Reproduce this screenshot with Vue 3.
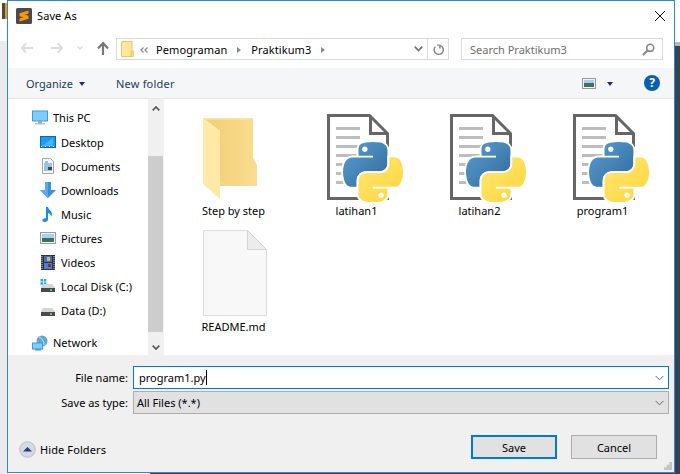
<template>
  <div class="screen">
    <!-- whatever is behind the dialog -->
    <div class="behind-left"></div>
    <div class="behind-logo"></div>
    <div class="behind-right"></div>
    <div class="behind-bottom"></div>

    <svg class="defs" width="0" height="0">
      <defs>
        <linearGradient id="pyBlue" x1="0" y1="0" x2="1" y2="1">
          <stop offset="0" stop-color="#5a9fd4" />
          <stop offset="1" stop-color="#306998" />
        </linearGradient>
        <linearGradient id="pyYellow" x1="0" y1="0" x2="1" y2="1">
          <stop offset="0" stop-color="#ffe873" />
          <stop offset="1" stop-color="#ffd43b" />
        </linearGradient>
        <linearGradient id="folderBack" x1="0" y1="0" x2="1" y2="0">
          <stop offset="0" stop-color="#f0cd72" />
          <stop offset="1" stop-color="#f9dd90" />
        </linearGradient>
      </defs>
    </svg>

    <div class="dialog">
      <div class="titlebar">
        <svg class="app-icon" viewBox="0 0 16 16">
          <rect width="16" height="16" rx="1.5" fill="#4a4a4a" />
          <path d="M12.5 2.5 3.5 5.2v3l9-2.7zM12.5 7.8l-9-2.6v3l9 2.6zM12.5 7.8l-9 2.7v3l9-2.7z" fill="#ff9800" />
        </svg>
        <span class="title">Save As</span>
        <svg class="close" viewBox="0 0 10 10">
          <path d="M0 0 10 10M10 0 0 10" stroke="#111" stroke-width="1" fill="none" />
        </svg>
      </div>

      <div class="navbar">
        <svg class="nav-arrow" viewBox="0 0 12 10">
          <path d="M5 .5 1 5l4 4.500M1 5h11" stroke="#dcdcdc" stroke-width="2" fill="none" />
        </svg>
        <svg class="nav-arrow forward" viewBox="0 0 12 10">
          <path d="M7 .5 11 5l-4 4.500M11 5H0" stroke="#dcdcdc" stroke-width="2" fill="none" />
        </svg>
        <svg class="nav-drop" viewBox="0 0 6 4">
          <path d="M.5.5 3 3 5.500.5" stroke="#dcdcdc" stroke-width="1.400" fill="none" />
        </svg>
        <svg class="nav-up" viewBox="0 0 12 13">
          <path d="M1 6.500 6 1l5 5.500M6 1.500V13" stroke="#777" stroke-width="2.200" fill="none" />
        </svg>

        <div class="address">
          <svg class="addr-folder" viewBox="0 0 13 16">
            <path d="M.5.5h10.500v15H.5z" fill="#fee79a" stroke="#e8c462" />
            <path d="M10 10h2.500v5.500H10z" fill="#f7d67e" stroke="#e8c462" stroke-width=".8" />
          </svg>
          <svg class="crumb-back" viewBox="0 0 8 6">
            <path d="M3.500.5 1 3l2.500 2.500M7.500.5 5 3l2.500 2.500" stroke="#888" stroke-width="1.300" fill="none" />
          </svg>
          <span class="crumb">Pemograman</span>
          <svg class="crumb-arrow" viewBox="0 0 4 6"><path d="M0 0 4 3 0 6z" fill="#888" /></svg>
          <span class="crumb">Praktikum3</span>
          <svg class="crumb-arrow" viewBox="0 0 4 6"><path d="M0 0 4 3 0 6z" fill="#888" /></svg>
          <svg class="addr-drop" viewBox="0 0 9 6">
            <path d="M.7.7 4.500 4.500 8.300.7" stroke="#777" stroke-width="1.700" fill="none" />
          </svg>
          <div class="refresh">
            <svg viewBox="0 0 12 12" width="11" height="11">
              <path d="M7.500 1.500A5 5 0 1 1 2.500 3M7.500 1.500V5M7.500 1.500 4.500 1" stroke="#888" stroke-width="1.600" fill="none" />
            </svg>
          </div>
        </div>

        <div class="search">
          <span>Search Praktikum3</span>
          <svg viewBox="0 0 14 14" width="13" height="13">
            <circle cx="8.800" cy="5.200" r="3.800" stroke="#888" stroke-width="1.700" fill="none" />
            <path d="M6 8 1 13" stroke="#888" stroke-width="2.200" />
          </svg>
        </div>
      </div>

      <div class="toolbar">
        <span class="tool">Organize</span>
        <span class="tri"></span>
        <span class="tool new-folder">New folder</span>
        <svg class="view-icon" viewBox="0 0 14 11">
          <rect x=".5" y=".5" width="13" height="10" fill="#eef3f6" stroke="#999" />
          <rect x="2" y="2" width="10" height="3" fill="#a8d0e8" />
          <path d="M2 5h10v4H2z" fill="#3f6e62" />
        </svg>
        <span class="tri view-tri"></span>
        <span class="help">?</span>
      </div>

      <div class="main">
        <div class="sidebar">
          <div v-for="row in navRows" :key="row.label" class="nav-row" :class="row.cls">
            <svg class="nav-icon" viewBox="0 0 16 16" v-html="row.icon"></svg>
            <span>{{ row.label }}</span>
          </div>
        </div>

        <div class="scrollbar">
          <svg class="scroll-btn" viewBox="0 0 8 5"><path d="M.7 4.300 4 1l3.300 3.300" stroke="#555" stroke-width="1.700" fill="none" /></svg>
          <div class="thumb"></div>
          <svg class="scroll-btn down" viewBox="0 0 8 5"><path d="M.7.7 4 4l3.300-3.300" stroke="#555" stroke-width="1.700" fill="none" /></svg>
        </div>

        <div class="files">
          <div v-for="file in files" :key="file.name" class="file">
            <div class="file-icon" :class="file.kind">
              <svg v-if="file.kind === 'folder'" width="54" height="81" viewBox="0 0 54 81">
                <path d="M0 0h50v40l4 7v21H17V13z" fill="url(#folderBack)" />
                <path d="M0 0h50v1.500H2z" fill="#fbe6a8" />
                <path d="M0 0 17 13v68L0 66z" fill="#fee9a6" />
                <path d="M17 64 34 68H17z" fill="#f7d68a" />
              </svg>
              <svg v-else-if="file.kind === 'py'" width="76" height="88" viewBox="0 0 76 88">
                <path d="M1.500 1.500h41l18 18v65h-59z" fill="#fff" stroke="#666" stroke-width="3" />
                <path d="M43.500 2v17.500H61" fill="none" stroke="#666" stroke-width="3" />
                <g fill="#bdbdbd">
                  <rect x="9" y="13" width="24" height="3" />
                  <rect x="9" y="22" width="24" height="3" />
                  <rect x="9" y="31" width="24" height="3" />
                  <rect x="9" y="40" width="24" height="3" />
                  <rect x="9" y="49" width="24" height="3" />
                  <rect x="9" y="58" width="24" height="3" />
                  <rect x="9" y="67" width="24" height="3" />
                </g>
                <g transform="translate(16 28) scale(.54)" stroke="#fff" stroke-width="7" paint-order="stroke">
                  <path fill="url(#pyBlue)" d="M54.919 0c-4.584.022-8.961.413-12.813 1.095C30.760 3.099 28.700 7.295 28.700 15.032v10.219h26.813v3.406H18.638c-7.793 0-14.616 4.684-16.750 13.594-2.462 10.213-2.571 16.586 0 27.250 1.906 7.938 6.458 13.594 14.250 13.594h9.219V70.844c0-8.850 7.657-16.656 16.750-16.656h26.781c7.455 0 13.406-6.138 13.406-13.625V15.032c0-7.266-6.130-12.725-13.406-13.937C64.282.328 59.502-.020 54.919 0zM40.419 8.220c2.770 0 5.031 2.299 5.031 5.125 0 2.816-2.262 5.094-5.031 5.094-2.779 0-5.031-2.277-5.031-5.094 0-2.826 2.252-5.125 5.031-5.125z" />
                  <path fill="url(#pyYellow)" d="M85.638 28.657v11.906c0 9.231-7.826 17-16.750 17H42.106c-7.336 0-13.406 6.278-13.406 13.625v25.531c0 7.266 6.319 11.540 13.406 13.625 8.487 2.496 16.626 2.947 26.781 0 6.750-1.954 13.406-5.888 13.406-13.625V86.500H55.513v-3.406H95.700c7.793 0 10.696-5.436 13.406-13.594 2.799-8.399 2.680-16.476 0-27.250-1.926-7.757-5.604-13.594-13.406-13.594zM70.575 93.313c2.779 0 5.031 2.277 5.031 5.094 0 2.826-2.252 5.125-5.031 5.125-2.770 0-5.031-2.299-5.031-5.125 0-2.816 2.262-5.094 5.031-5.094z" />
                </g>
              </svg>
              <svg v-else width="64" height="86" viewBox="0 0 64 86">
                <path d="M.5.500h44l19 19v66H.5z" fill="#f8f8f8" stroke="#dcdcdc" />
                <path d="M44.500.500v19h19z" fill="#ececec" stroke="#d4d4d4" />
              </svg>
            </div>
            <div class="file-name">{{ file.name }}</div>
          </div>
        </div>
      </div>

      <div class="bottom">
        <div class="form">
          <label>File name:</label>
          <div class="field focus">
            <span class="value">program1.py</span><span class="caret"></span>
            <svg class="field-drop" viewBox="0 0 10 6"><path d="M.7.7 5 5 9.300.7" stroke="#555" stroke-width="1" fill="none" /></svg>
          </div>
          <label>Save as type:</label>
          <div class="field select">
            <span>All Files (*.*)</span>
            <svg class="field-drop" viewBox="0 0 10 6"><path d="M.7.7 5 5 9.300.7" stroke="#555" stroke-width="1" fill="none" /></svg>
          </div>
        </div>
        <div class="actions">
          <svg class="hide-icon" viewBox="0 0 17 17">
            <circle cx="8.500" cy="8.500" r="7.800" fill="#d4d9e2" stroke="#b9c0cc" />
            <path d="M4 10.500 8.500 6l4.500 4.500z" fill="#243f86" />
          </svg>
          <span class="hide-label">Hide Folders</span>
          <button class="btn primary">Save</button>
          <button class="btn">Cancel</button>
        </div>
        <svg class="grip" viewBox="0 0 9 9">
          <path d="M6 0h3v3H6zM3 3h3v3H3zM6 3h3v3H6zM0 6h3v3H0zM3 6h3v3H3zM6 6h3v3H6z" fill="#c4c4c4" />
        </svg>
      </div>
    </div>
  </div>
</template>

<script setup>
const monitor = '<rect x=".5" y="1" width="15" height="10" fill="#7fcdfa" stroke="#3d9bd8"/><rect x="6" y="11" width="4" height="2" fill="#9aa4ad"/><rect x="3" y="13" width="10" height="1.500" fill="#b8c0c8"/>'
const disk = '<path d="M1 9 3 6h9l3 3v4H1z" fill="#d6d6d6"/><rect x="1" y="10" width="14" height="4" fill="#4a4a4a"/><rect x="10" y="11" width="2" height="2" fill="#3fd34a"/>'

const navRows = [
  { label: 'This PC', cls: 'top', icon: monitor },
  { label: 'Desktop', cls: 'sub', icon: '<rect x=".5" y="2.500" width="15" height="11" fill="#1d9bf0" stroke="#0a67b8"/><path d="M2 12 13 4v8z" fill="#4cb4f6"/><path d="M1 12.500h14" stroke="#fff" stroke-dasharray="1 3"/>' },
  { label: 'Documents', cls: 'sub', icon: '<path d="M2.500.5h8l3 3v12h-11z" fill="#f4f6f8" stroke="#a8a8a8"/><path d="M5 4h3M4 6h8M4 8h8M4 10h8M4 12h8" stroke="#3d8fd0"/><rect x="8" y="9" width="4" height="3" fill="#34495e"/>' },
  { label: 'Downloads', cls: 'sub', icon: '<path d="M5 0h6v8h5l-8 8-8-8h5z" fill="#3b8fdd"/><path d="M5 0h3v16l-8-8h5z" fill="#5aa9ee"/>' },
  { label: 'Music', cls: 'sub', icon: '<path d="M6 1h2c.500 3 4 4 4 7 0 1-.5 2-1 3 .2-2-1-3.500-3-4v6.500C8 15 6.500 16 4.500 16S2 14.800 2.500 13.800 4.500 12 6 12.300z" fill="#1b8ce8"/>' },
  { label: 'Pictures', cls: 'sub', icon: '<rect x=".5" y="2.500" width="15" height="11" fill="#eef3f6" stroke="#9c9c9c"/><rect x="2" y="4" width="12" height="4" fill="#a9d3ec"/><path d="M2 8h12v4H2z" fill="#3f6e62"/>' },
  { label: 'Videos', cls: 'sub', icon: '<rect x="1" y="1" width="14" height="15" fill="#333"/><path d="M2 2v13" stroke="#ddd" stroke-dasharray="1 1"/><path d="M14 2v13" stroke="#ddd" stroke-dasharray="1 1"/><rect x="4" y="2" width="8" height="6" fill="#3a6fd0"/><rect x="4" y="9" width="8" height="6" fill="#4a7fe0"/><rect x="7" y="3" width="3" height="4" fill="#e8b530"/><rect x="8" y="10" width="3" height="3" fill="#8a3030"/>' },
  { label: 'Local Disk (C:)', cls: 'sub', icon: '<rect x=".5" y="1" width="2.500" height="2.500" fill="#19aaf0"/><rect x="3.800" y="1" width="2.500" height="2.500" fill="#19aaf0"/><rect x=".5" y="4.300" width="2.500" height="2.500" fill="#19aaf0"/><rect x="3.800" y="4.300" width="2.500" height="2.500" fill="#19aaf0"/>' + disk },
  { label: 'Data (D:)', cls: 'sub', icon: disk },
  { label: 'Network', cls: 'top net', icon: '<circle cx="10" cy="6" r="5.500" fill="#5fa8dc"/><path d="M7 2c3 1 5 4 5 8" stroke="#bfe0f4" fill="none"/><rect x=".5" y="8" width="10" height="6" fill="#7fcdfa" stroke="#3d9bd8"/><rect x="3" y="14" width="6" height="1.500" fill="#3d9bd8"/>' },
]

const files = [
  { name: 'Step by step', kind: 'folder' },
  { name: 'latihan1', kind: 'py' },
  { name: 'latihan2', kind: 'py' },
  { name: 'program1', kind: 'py' },
  { name: 'README.md', kind: 'blank' },
]
</script>

<style>
html, body {
  margin: 0;
  background: #fff;
  overflow: hidden;
}
</style>

<style scoped>
.screen {
  position: relative;
  width: 680px;
  height: 474px;
  overflow: hidden;
  font-family: "Noto Sans", "Open Sans", sans-serif;
  font-size: 11px;
  color: #000;
}

.behind-left {
  position: absolute;
  left: 0;
  top: 41px;
  width: 7px;
  bottom: 0;
  background: #ececec;
}

.behind-logo {
  position: absolute;
  left: 2px;
  top: 3px;
  width: 5px;
  height: 16px;
  background: linear-gradient(90deg, #4a4a4a 0 3px, #ff9800 3px);
}

.behind-right {
  position: absolute;
  right: 0;
  top: 42px;
  width: 5px;
  bottom: 0;
  background: linear-gradient(#b8b8b8 0, #b8b8b8 4px, #3b424c 4px);
}

.behind-bottom {
  position: absolute;
  left: 150px;
  right: 0;
  bottom: 0;
  height: 1px;
  background: #3b424c;
}

.defs {
  position: absolute;
}

.dialog {
  position: relative;
  box-sizing: border-box;
  margin-left: 7px;
  width: 668px;
  height: 473px;
  border: 1px solid #2b88d8;
  background: #fff;
  display: flex;
  flex-direction: column;
}

.titlebar {
  height: 32px;
  flex: none;
  display: flex;
  align-items: center;
  padding-left: 8px;
  padding-right: 9px;
  box-sizing: border-box;
}

.app-icon {
  width: 16px;
  height: 16px;
  margin-top: -2px;
}

.title {
  margin-left: 5px;
  margin-top: -3px;
  letter-spacing: .1px;
}

.close {
  width: 10px;
  height: 10px;
  margin-left: auto;
  margin-top: -3px;
}

.navbar {
  height: 35px;
  flex: none;
  display: flex;
  align-items: flex-start;
  padding-top: 5px;
  box-sizing: border-box;
}

.nav-arrow {
  width: 12px;
  height: 10px;
  margin-left: 13px;
  margin-top: 5px;
}

.nav-arrow.forward {
  margin-left: 18px;
}

.nav-drop {
  width: 6px;
  height: 4px;
  margin-left: 14px;
  margin-top: 8px;
}

.nav-up {
  width: 12px;
  height: 13px;
  margin-left: 14px;
  margin-top: 4px;
}

.address {
  margin-left: 7px;
  width: 333px;
  height: 22px;
  box-sizing: border-box;
  border: 1px solid #d9d9d9;
  display: flex;
  align-items: center;
}

.addr-folder {
  width: 13px;
  height: 16px;
  margin-left: 4px;
}

.crumb-back {
  width: 8px;
  height: 6px;
  margin-left: 6px;
  margin-right: 8px;
  margin-top: 1px;
}

.crumb {
  letter-spacing: .1px;
}

.crumb-arrow {
  width: 4px;
  height: 6px;
  margin: 1px 10px 0;
}

.addr-drop {
  width: 9px;
  height: 6px;
  margin-left: auto;
  margin-right: 4px;
}

.refresh {
  width: 20px;
  height: 20px;
  border-left: 1px solid #d9d9d9;
  display: flex;
  align-items: center;
  justify-content: center;
}

.search {
  margin-left: 12px;
  width: 202px;
  height: 22px;
  box-sizing: border-box;
  border: 1px solid #d9d9d9;
  display: flex;
  align-items: center;
  justify-content: space-between;
  padding: 0 7px 0 8px;
  color: #6d6d6d;
}

.toolbar {
  height: 31px;
  flex: none;
  box-sizing: border-box;
  background: #f5f6f7;
  border-bottom: 1px solid #e6e6e6;
  display: flex;
  align-items: center;
  padding-left: 18px;
  padding-right: 14px;
  color: #1e395b;
}

.tri {
  width: 0;
  height: 0;
  border-left: 3.500px solid transparent;
  border-right: 3.500px solid transparent;
  border-top: 4px solid #1e2f5f;
  margin-left: 6px;
  margin-top: 1px;
}

.new-folder {
  margin-left: 31px;
  letter-spacing: .2px;
}

.view-icon {
  width: 14px;
  height: 11px;
  margin-left: auto;
}

.view-tri {
  margin-left: 11px;
  margin-right: 31px;
}

.help {
  width: 16px;
  height: 16px;
  border-radius: 50%;
  background: #0a5fb0;
  color: #fff;
  font-weight: 700;
  font-size: 12px;
  line-height: 16px;
  text-align: center;
}

.main {
  height: 256px;
  flex: none;
  display: flex;
}

.sidebar {
  width: 140px;
  flex: none;
  padding-top: 7px;
  box-sizing: border-box;
}

.nav-row {
  height: 24px;
  display: flex;
  align-items: center;
}

.nav-row.top {
  padding-left: 24px;
  gap: 5px;
}

.nav-row.top span {
  margin-top: -2px;
}

.nav-row.sub {
  padding-left: 32px;
  gap: 5px;
}

.nav-row.net {
  margin-top: 9px;
}

.nav-icon {
  width: 16px;
  height: 16px;
  flex: none;
}

.scrollbar {
  width: 15px;
  flex: none;
  background: #f0f0f0;
  position: relative;
  display: flex;
  flex-direction: column;
  align-items: center;
}

.scroll-btn {
  width: 8px;
  height: 5px;
  margin-top: 7px;
  flex: none;
}

.scroll-btn.down {
  margin-top: 13px;
}

.thumb {
  width: 100%;
  height: 176px;
  margin-top: 45px;
  background: #cdcdcd;
  flex: none;
}

.files {
  flex: 1;
  border-left: 1px solid #f2f2f2;
  padding: 9px 0 0 8px;
  display: grid;
  grid-template-columns: repeat(4, 123px);
  grid-auto-rows: 116px;
  align-content: start;
}

.file {
  display: flex;
  flex-direction: column;
  align-items: center;
  position: relative;
}

.file-icon {
  height: 94px;
  display: flex;
  align-items: flex-end;
  justify-content: center;
}

/* the glyphs don't sit centred over their labels */
.file-icon.folder {
  margin-left: -8px;
}

.file-icon.folder svg {
  margin-bottom: 3px;
}

.file-icon.py {
  margin-left: 16px;
}

.file-icon.blank {
  margin-left: 2px;
}

.file-icon.blank svg {
  margin-bottom: 2px;
}

.file-name {
  line-height: 16px;
  margin-top: 1px;
}

.bottom {
  flex: 1;
  background: #f0f0f0;
  position: relative;
}

.form {
  display: grid;
  grid-template-columns: 120px 1fr;
  column-gap: 5px;
  row-gap: 2px;
  padding: 11px 5px 0 0;
}

.form label {
  text-align: right;
  line-height: 23px;
}

.field {
  height: 23px;
  box-sizing: border-box;
  display: flex;
  align-items: center;
  position: relative;
}

.field.focus {
  border: 1px solid #0078d7;
  background: #fff;
  padding-left: 5px;
}

.field.select {
  border: 1px solid #adadad;
  background: #e1e1e1;
  padding-left: 3px;
}

.value {
  color: #000;
}

.caret {
  width: 1px;
  height: 15px;
  background: #000;
  margin-left: 0;
}

.field-drop {
  position: absolute;
  right: 4px;
  top: 8px;
  width: 9px;
  height: 6px;
}

.actions {
  display: flex;
  align-items: center;
  margin-top: 21px;
  padding: 0 17px 0 11px;
  height: 24px;
}

.hide-icon {
  width: 17px;
  height: 17px;
  margin-right: 4px;
  margin-top: 5px;
}

.hide-label {
  margin-right: auto;
  margin-top: 5px;
  letter-spacing: .1px;
}

.btn {
  width: 86px;
  height: 24px;
  box-sizing: border-box;
  border: 1px solid #adadad;
  background: #e1e1e1;
  font: inherit;
  color: #000;
  padding: 0;
  margin-left: 14px;
}

.btn.primary {
  border: 2px solid #0078d7;
}

.grip {
  position: absolute;
  right: 2px;
  bottom: 2px;
  width: 8px;
  height: 8px;
}
</style>
